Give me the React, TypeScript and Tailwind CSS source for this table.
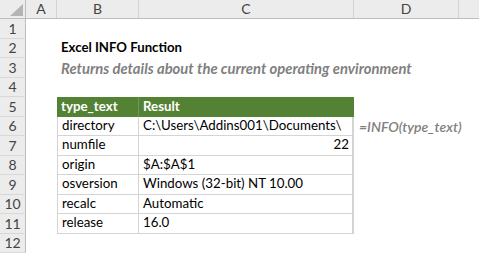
const rows = [
  { b: "type_text", c: "Result", head: true },
  { b: "directory", c: "C:\\Users\\Addins001\\Documents\\", d: "=INFO(type_text)" },
  { b: "numfile", c: "22", right: true },
  { b: "origin", c: "$A:$A$1" },
  { b: "osversion", c: "Windows (32-bit) NT 10.00" },
  { b: "recalc", c: "Automatic" },
  { b: "release", c: "16.0" },
];

const RowNum = ({ n }: { n: number }) => (
  <div className="w-[26px] shrink-0 h-full bg-[#ececec] border-r border-[#bdbdbd] border-b border-b-[#d8d8d8] flex items-center justify-center text-[#444] text-[14px]">
    {n}
  </div>
);

export default function App() {
  return (
    <div
      className="w-[479px] h-[253px] bg-white overflow-hidden text-[13.3px] text-black"
      style={{ fontFamily: "Lato, 'Open Sans', sans-serif" }}
    >
      {/* column headers */}
      <div className="flex h-[19px] bg-[#ececec] border-b border-[#bdbdbd] text-[#444] text-[14px]">
        <div className="w-[26px] shrink-0 border-r border-[#bdbdbd] relative">
          <svg className="absolute right-[2px] bottom-[2px]" width="13" height="12" viewBox="0 0 13 12">
            <polygon points="13,0 13,12 0,12" fill="#b4b4b4" />
          </svg>
        </div>
        <div className="w-[31px] shrink-0 border-r border-[#d4d4d4] text-center leading-[18px]">A</div>
        <div className="w-[82px] shrink-0 border-r border-[#d4d4d4] text-center leading-[18px]">B</div>
        <div className="w-[215px] shrink-0 border-r border-[#d4d4d4] text-center leading-[18px]">C</div>
        <div className="w-[105px] shrink-0 border-r border-[#d4d4d4] text-center leading-[18px]">D</div>
        <div className="flex-1" />
      </div>

      {/* rows 1-4 */}
      <div className="flex h-[19.5px]">
        <RowNum n={1} />
      </div>
      <div className="flex h-[19.5px]">
        <RowNum n={2} />
        <div className="w-[31px] shrink-0" />
        <div className="pl-[4px] font-bold text-[13.2px] whitespace-nowrap flex items-center">Excel INFO Function</div>
      </div>
      <div className="flex h-[19.5px]">
        <RowNum n={3} />
        <div className="w-[31px] shrink-0" />
        <div className="pl-[4px] font-bold italic text-[14.8px] text-[#7f7f7f] whitespace-nowrap flex items-center">
          Returns details about the current operating environment
        </div>
      </div>
      <div className="flex h-[19.5px]">
        <RowNum n={4} />
      </div>

      {/* table rows 5-11 */}
      {rows.map((r, i) => (
        <div key={i} className="flex h-[19.5px]">
          <RowNum n={i + 5} />
          <div className="w-[31px] shrink-0" />
          <div
            className={
              r.head
                ? "w-[82px] shrink-0 bg-[#548235] text-white font-bold pl-[4px] flex items-center border-r border-[#6f9a52]"
                : "w-[82px] shrink-0 pl-[4px] flex items-center border-l border-b border-r border-[#d4d4d4]"
            }
          >
            {r.b}
          </div>
          <div
            className={
              r.head
                ? "w-[215px] shrink-0 bg-[#548235] text-white font-bold pl-[4px] flex items-center"
                : `w-[215px] shrink-0 flex items-center border-b border-r-2 border-[#d4d4d4] whitespace-nowrap ${
                    r.right ? "justify-end pr-[3px]" : "pl-[4px]"
                  }`
            }
          >
            {r.c}
          </div>
          {r.d && (
            <div className="pl-[5px] italic text-[14px] text-[#7f7f7f] font-semibold whitespace-nowrap flex items-center">{r.d}</div>
          )}
        </div>
      ))}

      <div className="flex h-[19.5px]">
        <RowNum n={12} />
      </div>
    </div>
  );
}
